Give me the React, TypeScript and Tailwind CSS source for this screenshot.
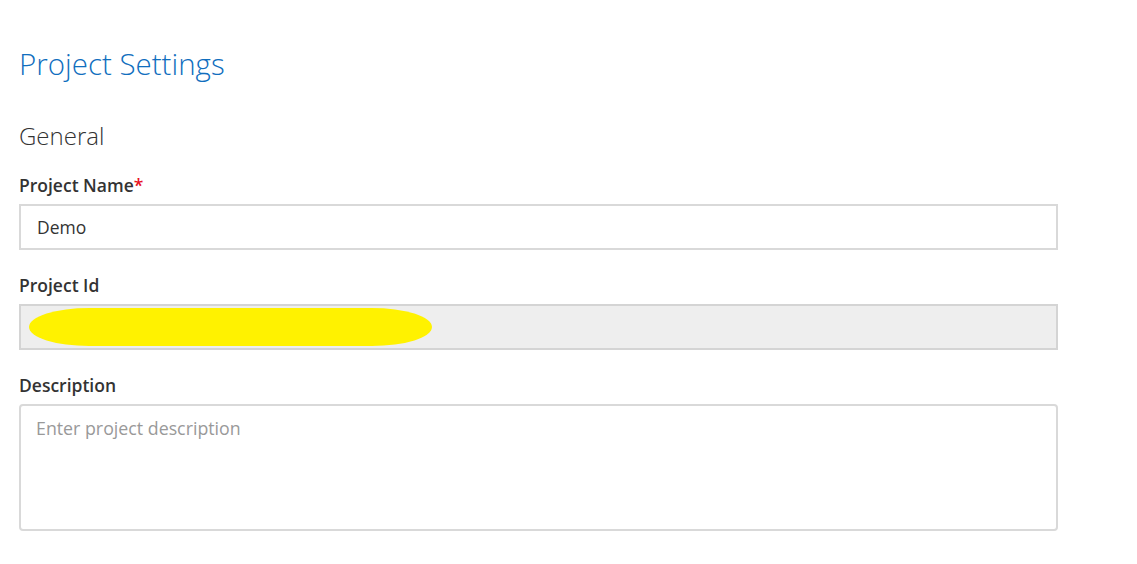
export default function App() {
  return (
    <div
      className="min-h-[564px] w-[1137px] bg-white px-[19px] pt-[44px] text-[#333]"
      style={{ fontFamily: '"Segoe UI", "Open Sans", "Noto Sans", sans-serif' }}
    >
      <h1 className="text-[29.5px] font-light leading-[40px] text-[#106ebe]">Project Settings</h1>

      <h2 className="mt-[37px] text-[24px] font-light leading-[30px] text-[#333]">General</h2>

      <div className="mt-[23px] w-[1039px]">
        <label className="block text-[17.5px] font-semibold leading-[22px]">
          Project Name<span className="text-[#e81123]">*</span>
        </label>
        <input
          type="text"
          defaultValue="Demo"
          className="mt-[8px] block h-[46px] w-full border-2 border-[#d9d9d9] bg-white px-[16px] text-[17.5px] text-[#333] outline-none"
        />

        <label className="mt-[24px] block text-[17.5px] font-semibold leading-[22px]">Project Id</label>
        <div className="mt-[8px] flex h-[46px] w-full items-center border-2 border-[#d4d4d4] bg-[#eeeeee] px-[8px]">
          <div className="h-[38px] w-[403px] rounded-[60px/19px] bg-[#fff200]" />
        </div>

        <label className="mt-[24px] block text-[17.5px] font-semibold leading-[22px]">Description</label>
        <textarea
          placeholder="Enter project description"
          className="mt-[8px] block h-[127px] w-full resize-none rounded-[4px] border-2 border-[#d9d9d9] bg-white px-[15px] py-[9px] text-[17.8px] text-[#333] outline-none placeholder:text-[#999]"
        />
      </div>
    </div>
  );
}
